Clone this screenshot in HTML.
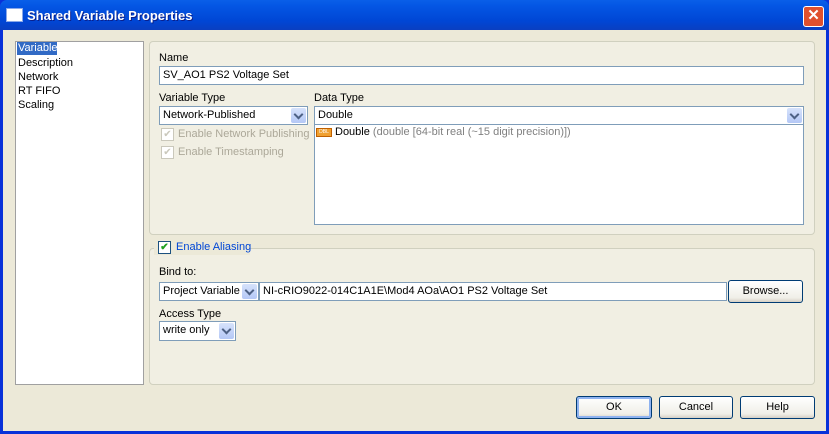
<!DOCTYPE html><html><head><style>
*{box-sizing:border-box;margin:0;padding:0}
body{width:829px;height:434px;overflow:hidden;font-family:"Liberation Sans",Arial,sans-serif;font-size:11px;color:#000;background:#0831d9;position:relative}
.a{position:absolute;white-space:nowrap}
.title{left:0;top:0;width:829px;height:30px;background:linear-gradient(#0a5fe8,#0456e4 20%,#0046d5 70%,#0a3fc0);border-radius:7px 7px 0 0}
.tt{left:27px;top:8px;color:#fff;font-weight:bold;font-size:13px;text-shadow:1px 1px #0a1f8a}
.body{left:3px;top:30px;width:823px;height:401px;background:#ece9d8}
.box{background:#fff;border:1px solid #7f9db9}
.grp{border:1px solid #d0d0bf;border-radius:4px;background:#f1efe3}
.sel{background:#fff;border:1px solid #7f9db9;padding:2px 3px;line-height:13px;overflow:hidden}
.dd{position:absolute;right:1px;top:1px;bottom:1px;width:15px;background:linear-gradient(#d6e2fb,#b4c8f6);border-radius:2px}
.dd:after{content:"";position:absolute;left:4px;top:3px;width:5px;height:5px;border-right:2px solid #4d6185;border-bottom:2px solid #4d6185;transform:rotate(45deg)}
.btn{border:1px solid #003c74;border-radius:3px;background:linear-gradient(#fff,#f0efe8 80%,#d6d0c5);text-align:center;line-height:20px}
.chk{width:13px;height:13px;border:1px solid #cac8bb;background:#fff;color:#cac8bb;font-size:10px;line-height:11px;text-align:center}
.gray{color:#aca899}
</style></head><body>
<div class="a title"></div>
<div class="a" style="left:7px;top:9px;width:15px;height:12px;background:#fff;border-top:3px solid #fff;box-shadow:0 0 0 1px #8aa8e8"></div>
<div class="a tt">Shared Variable Properties</div>
<div class="a" style="left:803px;top:6px;width:21px;height:21px;background:#e0502d;border:1px solid #fff;border-radius:3px;color:#fff;font-weight:bold;font-size:15px;text-align:center;line-height:18px">✕</div>
<div class="a body"></div>
<div class="a box" style="left:15px;top:41px;width:129px;height:344px;border-color:#a0a0a0"></div>
<div class="a" style="left:17px;top:42px;width:40px;height:13px;background:#316ac5;color:#fff;padding-left:1px;line-height:13px">Variable</div>
<div class="a" style="left:18px;top:56px;line-height:14px">Description<br>Network<br>RT FIFO<br>Scaling</div>
<div class="a grp" style="left:149px;top:41px;width:666px;height:194px"></div>
<div class="a" style="left:159px;top:52px">Name</div>
<div class="a sel" style="left:159px;top:66px;width:645px;height:19px">SV_AO1 PS2 Voltage Set</div>
<div class="a" style="left:159px;top:92px">Variable Type</div>
<div class="a sel" style="left:159px;top:106px;width:149px;height:19px">Network-Published<div class="dd"></div></div>
<div class="a chk" style="left:161px;top:128px">✔</div><div class="a gray" style="left:178px;top:128px">Enable Network Publishing</div>
<div class="a chk" style="left:161px;top:146px">✔</div><div class="a gray" style="left:178px;top:146px">Enable Timestamping</div>
<div class="a" style="left:314px;top:92px">Data Type</div>
<div class="a sel" style="left:314px;top:106px;width:490px;height:19px">Double<div class="dd"></div></div>
<div class="a box" style="left:314px;top:124px;width:490px;height:101px;border-color:#7f9db9"></div>
<div class="a" style="left:316px;top:128px;width:16px;height:9px;background:#f0a030;border:1px solid #c06000;font-size:5px;color:#fff;line-height:7px;text-align:center">DBL</div>
<div class="a" style="left:335px;top:126px">Double <span style="color:#808080">(double [64-bit real (~15 digit precision)])</span></div>
<div class="a grp" style="left:149px;top:248px;width:666px;height:137px"></div>
<div class="a" style="left:154px;top:240px;width:96px;height:15px;background:#ece9d8"></div>
<div class="a chk" style="left:158px;top:241px;border-color:#1c5180;color:#21a121;font-weight:bold">✔</div>
<div class="a" style="left:176px;top:241px;color:#0046d5">Enable Aliasing</div>
<div class="a" style="left:159px;top:266px">Bind to:</div>
<div class="a sel" style="left:159px;top:282px;width:100px;height:19px">Project Variable<div class="dd"></div></div>
<div class="a sel" style="left:259px;top:282px;width:468px;height:19px">NI-cRIO9022-014C1A1E\Mod4 AOa\AO1 PS2 Voltage Set</div>
<div class="a btn" style="left:728px;top:280px;width:75px;height:23px">Browse...</div>
<div class="a" style="left:159px;top:308px">Access Type</div>
<div class="a sel" style="left:159px;top:321px;width:77px;height:20px">write only<div class="dd"></div></div>
<div class="a btn" style="left:576px;top:396px;width:76px;height:23px;box-shadow:inset 0 0 0 2px #8fb3f0">OK</div>
<div class="a btn" style="left:659px;top:396px;width:74px;height:23px">Cancel</div>
<div class="a btn" style="left:740px;top:396px;width:75px;height:23px">Help</div>
</body></html>
